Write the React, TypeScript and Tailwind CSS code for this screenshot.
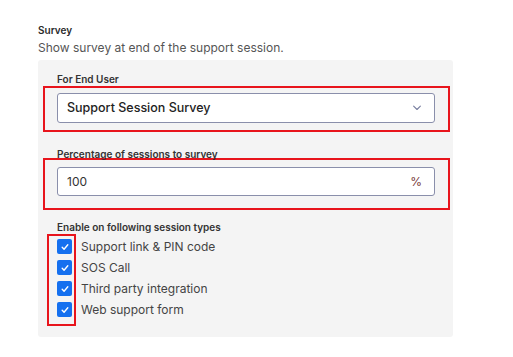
const sessionTypes = [
  "Support link & PIN code",
  "SOS Call",
  "Third party integration",
  "Web support form",
];

function CheckIcon() {
  return (
    <svg viewBox="0 0 16 16" className="h-[10px] w-[10px]" fill="none">
      <path d="M3.5 8.5l3 3 6-7" stroke="white" strokeWidth="2.2" strokeLinecap="round" strokeLinejoin="round" />
    </svg>
  );
}

export default function App() {
  return (
    <div className="min-h-[357px] w-[513px] bg-white pl-[38px] pt-[23px] font-['Inter',sans-serif]">
      {/* Heading */}
      <div className="text-[10px] font-semibold leading-[14px] text-[#2b2b2b]">Survey</div>
      <div className="mt-[3px] text-[12px] leading-[16px] text-[#555]">Show survey at end of the support session.</div>

      {/* Panel */}
      <div className="mt-[4px] w-[415px] rounded-[3px] bg-[#f4f4f4] pb-[11px] pl-[19px] pr-[18px] pt-[13px]">
        <div className="text-[10px] font-semibold leading-[12px] text-[#333]">For End User</div>
        <div className="-ml-[14px] -mr-[15px] mt-[1px] border-2 border-[#e8141c] pb-[7px] pl-[12px] pr-[13px] pt-[5px]">
          <div className="flex h-[30px] items-center justify-between rounded-[3px] border border-[#8a8fab] bg-white pl-[9px] pr-[12px]">
            <span className="text-[12.5px] font-medium text-[#222]">Support Session Survey</span>
            <svg viewBox="0 0 12 8" className="h-[6px] w-[10px]" fill="none">
              <path d="M1.5 1.5l4.5 4.5 4.5-4.5" stroke="#7a80a0" strokeWidth="1.5" strokeLinecap="round" strokeLinejoin="round" />
            </svg>
          </div>
        </div>

        <div className="mt-[16px] text-[10px] font-semibold leading-[12px] text-[#333]">Percentage of sessions to survey</div>
        <div className="-ml-[14px] -mr-[15px] mt-[-2px] border-2 border-[#e8141c] pb-[12px] pl-[12px] pr-[13px] pt-[7px]">
          <div className="flex h-[29px] items-center justify-between rounded-[3px] border border-[#8a8fab] bg-white pl-[9px] pr-[12px]">
            <span className="text-[12px] text-[#333]">100</span>
            <span className="text-[12px] text-[#7a3a3a]">%</span>
          </div>
        </div>

        <div className="mt-[11px] text-[10px] font-semibold leading-[12px] text-[#333]">Enable on following session types</div>
        <div className="mt-[1px] flex">
          <div className="-ml-[10px] flex flex-col gap-[6px] border-2 border-[#e8141c] pb-[7px] pl-[8px] pr-[2px] pt-[3px]">
            {sessionTypes.map((t) => (
              <div key={t} className="flex h-[15px] w-[15px] items-center justify-center rounded-[2px] bg-[#1570ef]">
                <CheckIcon />
              </div>
            ))}
          </div>
          <div className="ml-[5px] flex flex-col gap-[6px] pt-[5px]">
            {sessionTypes.map((t) => (
              <div key={t} className="flex h-[15px] items-center text-[12px] text-[#444]">
                {t}
              </div>
            ))}
          </div>
        </div>
      </div>
    </div>
  );
}
